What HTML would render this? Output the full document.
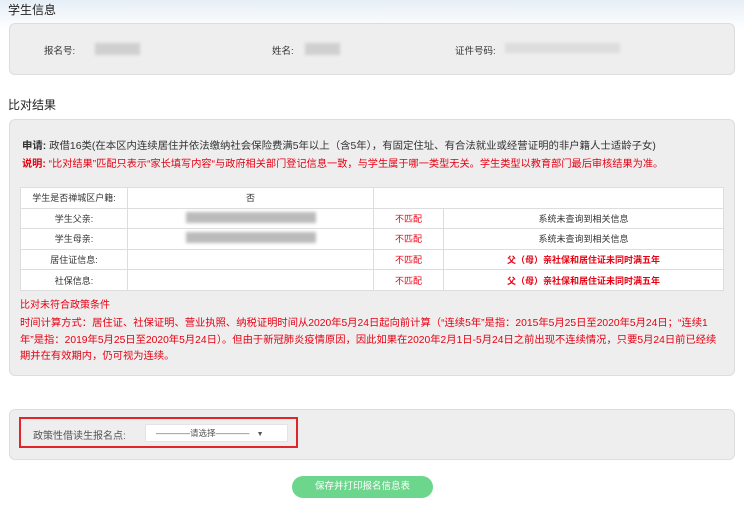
<!DOCTYPE html>
<html><head><meta charset="utf-8"><style>
*{margin:0;padding:0;box-sizing:border-box}
body{width:744px;height:505px;overflow:hidden;font-family:"Liberation Sans","Noto Sans CJK SC",sans-serif;color:#333;background:#fff;position:relative}
.sky{position:absolute;left:0;top:0;width:744px;height:30px;background:linear-gradient(#e6eef6,#fff)}
.h{position:absolute;left:8px;font-size:12px;color:#222}
.panel{position:absolute;left:9px;width:726px;background:#eeeeee;border:1px solid #ddd;border-radius:6px}
.t{position:absolute;font-size:9.5px;white-space:nowrap}
.blur{position:absolute;background:#cfcfcf;filter:blur(1.5px)}
table{position:absolute;left:20px;top:187px;width:704px;border-collapse:collapse;background:#fff;font-size:9px}
td{border:1px solid #ddd;height:20.6px;text-align:center;padding:0}
.r{color:#e60012}
</style></head><body>
<div class="sky"></div>
<div class="h" style="top:1px">学生信息</div>
<div class="panel" style="top:23px;height:52px"></div>
<div class="t" style="left:44px;top:43px">报名号:</div>
<div class="blur" style="left:95px;top:43px;width:45px;height:12px"></div>
<div class="t" style="left:272px;top:43px">姓名:</div>
<div class="blur" style="left:305px;top:43px;width:35px;height:12px"></div>
<div class="t" style="left:455px;top:43px">证件号码:</div>
<div class="blur" style="left:505px;top:43px;width:115px;height:10px;background:#ddd"></div>

<div class="h" style="top:96px">比对结果</div>
<div class="panel" style="top:119px;height:257px"></div>
<div class="t" style="left:22px;top:137px;font-size:10.4px"><b>申请:</b> 政借16类(在本区内连续居住并依法缴纳社会保险费满5年以上（含5年），有固定住址、有合法就业或经营证明的非户籍人士适龄子女)</div>
<div class="t r" style="left:22px;top:155px;font-size:10.2px"><b>说明:</b> “比对结果”匹配只表示“家长填写内容“与政府相关部门登记信息一致，与学生属于哪一类型无关。学生类型以教育部门最后审核结果为准。</div>
<table>
<tr><td style="width:107px">学生是否禅城区户籍:</td><td style="width:246px">否</td><td colspan="2"></td></tr>
<tr><td>学生父亲:</td><td><span style="display:inline-block;width:130px;height:11px;background:#bbb;filter:blur(1.5px)"></span></td><td class="r" style="width:70px">不匹配</td><td>系统未查询到相关信息</td></tr>
<tr><td>学生母亲:</td><td><span style="display:inline-block;width:130px;height:11px;background:#bbb;filter:blur(1.5px)"></span></td><td class="r">不匹配</td><td>系统未查询到相关信息</td></tr>
<tr><td>居住证信息:</td><td></td><td class="r">不匹配</td><td class="r"><b>父（母）亲社保和居住证未同时满五年</b></td></tr>
<tr><td>社保信息:</td><td></td><td class="r">不匹配</td><td class="r"><b>父（母）亲社保和居住证未同时满五年</b></td></tr>
</table>
<div class="t r" style="left:20px;top:296px;font-size:10px">比对未符合政策条件</div>
<div class="r" style="position:absolute;left:20px;top:316px;width:706px;font-size:10.3px;line-height:16.5px">时间计算方式：居住证、社保证明、营业执照、纳税证明时间从2020年5月24日起向前计算（“连续5年”是指：2015年5月25日至2020年5月24日；“连续1年”是指：2019年5月25日至2020年5月24日）。但由于新冠肺炎疫情原因，因此如果在2020年2月1日-5月24日之前出现不连续情况，只要5月24日前已经续期并在有效期内，仍可视为连续。</div>

<div class="panel" style="top:409px;height:51px"></div>
<div style="position:absolute;left:19px;top:417px;width:279px;height:31px;border:2px solid #e0252b"></div>
<div class="t" style="left:33px;top:427px;font-size:10px;color:#555">政策性借读生报名点:</div>
<div style="position:absolute;left:145px;top:424px;width:143px;height:18px;background:#fff;border:1px solid #e4e4e4;font-size:8.5px;color:#555;line-height:16px;padding-left:10px;white-space:nowrap">————请选择————&nbsp;&nbsp;&nbsp;<span style="font-size:7px">▼</span></div>
<div style="position:absolute;left:292px;top:476px;width:141px;height:22px;background:#6cd68c;border-radius:11px;color:#fff;font-size:9.5px;text-align:center;line-height:22px">保存并打印报名信息表</div>
</body></html>
